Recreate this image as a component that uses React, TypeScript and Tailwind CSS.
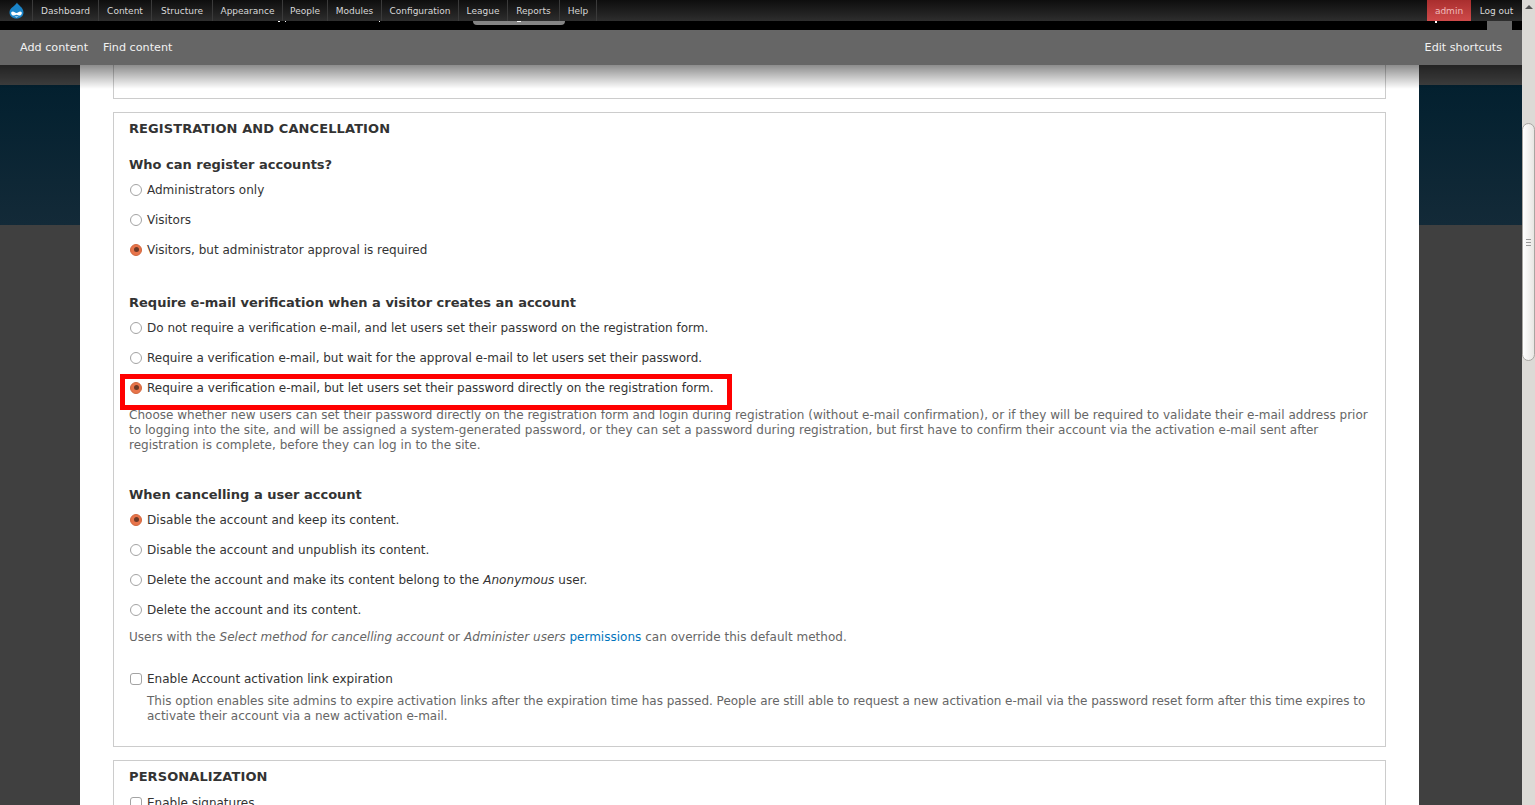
const font = { fontFamily: '"DejaVu Sans", sans-serif' };

const menu = [
    { label: 'Dashboard', width: 'w-[66px]' },
    { label: 'Content', width: 'w-[53px]' },
    { label: 'Structure', width: 'w-[61px]' },
    { label: 'Appearance', width: 'w-[70px]' },
    { label: 'People', width: 'w-[45px]' },
    { label: 'Modules', width: 'w-[54px]' },
    { label: 'Configuration', width: 'w-[77px]' },
    { label: 'League', width: 'w-[49px]' },
    { label: 'Reports', width: 'w-[52px]' },
    { label: 'Help', width: 'w-[37px]' },
];

function DrupalLogo() {
    return (
        <svg width="15" height="17" viewBox="0 0 15 17">
            <path d="M8 0.5 C8.5 3 14.5 5 14.5 10.5 C14.5 14 11.5 16.5 7.5 16.5 C3.5 16.5 0.5 14 0.5 10.5 C0.5 5.5 6.5 4 8 0.5 Z" fill="#1a84c8" />
            <path d="M2.5 10 C4 8.5 6 10.5 7.5 11 C9 10.5 11 8.5 12.5 10 C13.5 11.5 12 14 10 13.5 L7.5 12.8 L5 13.5 C3 14 1.5 11.5 2.5 10 Z" fill="#fff" />
            <path d="M5.5 14.5 H9.5 L7.5 15.6 Z" fill="#fff" />
        </svg>
    );
}

function Radio({ checked }: { checked?: boolean }) {
    if (checked) {
        return (
            <span className="ml-px flex h-[12px] w-[12px] shrink-0 items-center justify-center rounded-full border border-[#d0683f] bg-[#e8744a]">
                <span className="h-[5px] w-[5px] rounded-full bg-[#6b3a28]" />
            </span>
        );
    }
    return <span className="ml-px h-[12px] w-[12px] shrink-0 rounded-full border border-[#a3a3a3] bg-white" />;
}

function Option({ label, checked, className }: { label: React.ReactNode; checked?: boolean; className?: string }) {
    return (
        <div className={`flex h-[30px] items-center gap-[5px] ${className ?? ''}`}>
            <Radio checked={checked} />
            <span className="text-[12px] text-[#333]">{label}</span>
        </div>
    );
}

function Check({ label, className }: { label: string; className?: string }) {
    return (
        <div className={`flex h-[15px] items-center gap-[5px] ${className ?? ''}`}>
            <span className="ml-px h-[12px] w-[12px] shrink-0 rounded-[3px] border border-[#a3a3a3] bg-white" />
            <span className="text-[12px] text-[#333]">{label}</span>
        </div>
    );
}

function Heading({ children, className }: { children: React.ReactNode; className?: string }) {
    return <h3 className={`text-[13px] leading-[16px] font-bold text-[#333] ${className ?? ''}`}>{children}</h3>;
}

function Side({ className }: { className: string }) {
    return (
        <div className={`flex shrink-0 flex-col bg-[#404040] ${className}`}>
            <div className="h-[20px]" />
            <div className="h-[140px] bg-gradient-to-b from-[#03202f] to-[#132a38]" />
        </div>
    );
}

function Scrollbar() {
    return (
        <div className="flex h-[805px] w-[13px] shrink-0 flex-col bg-[#dcdad6]">
            <div className="flex h-[13px] items-center justify-center">
                <span className="h-0 w-0 border-x-[4px] border-b-[4px] border-x-transparent border-b-[#555]" />
            </div>
            <div className="h-[110px]" />
            <div className="flex h-[238px] flex-col items-center justify-center gap-[2px] rounded-[7px] border border-[#a8a6a2] bg-gradient-to-r from-[#fff] to-[#e8e6e3]">
                <span className="h-px w-[5px] bg-[#999]" />
                <span className="h-px w-[5px] bg-[#999]" />
                <span className="h-px w-[5px] bg-[#999]" />
            </div>
        </div>
    );
}

export default function App() {
    return (
        <div className="relative h-[805px] w-[1535px] overflow-hidden bg-white" style={font}>
            {/* admin toolbar */}
            <div className="flex h-[21px] items-stretch justify-between bg-gradient-to-b from-[#0e0e0e] to-[#2e2e2e] pr-[13px] text-[9px] text-[#d8d8d8]">
                <div className="flex items-stretch">
                    <div className="flex w-[33px] items-center justify-center border-r border-[#3a3a3a]">
                        <DrupalLogo />
                    </div>
                    {menu.map(item => (
                        <span key={item.label} className={`flex items-center justify-center border-r border-[#3a3a3a] pt-[2px] ${item.width}`}>{item.label}</span>
                    ))}
                </div>
                <div className="flex items-stretch">
                    <span className="flex w-[44px] items-center justify-center bg-gradient-to-b from-[#a92e2e] to-[#cf4a4a] pt-[2px] text-[#f0bcbc]">admin</span>
                    <span className="flex w-[51px] items-center justify-center pt-[2px]">Log out</span>
                </div>
            </div>

            {/* strip of page showing behind the toolbar */}
            <div className="flex h-[9px] bg-black">
                <span className="ml-[278px] h-px w-[2px] bg-white" />
                <span className="ml-[5px] h-px w-px bg-white" />
                <span className="ml-[93px] h-px w-px bg-white" />
                <div className="ml-[93px] flex h-[4px] w-[92px] justify-center rounded-b-[8px] bg-[#858585]">
                    <span className="h-px w-[4px] bg-white" />
                </div>
                <span className="ml-[870px] h-[2px] w-[2px] bg-white" />
                <div className="ml-[50px] w-[25px] bg-[#666]" />
            </div>

            {/* shortcuts */}
            <div className="flex h-[35px] items-center justify-between bg-[#666] pt-[2px] pl-[20px] pr-[33px] text-[11.2px] text-[#f2f2f2]">
                <div className="flex gap-[15px]">
                    <span>Add content</span>
                    <span>Find content</span>
                </div>
                <span>Edit shortcuts</span>
            </div>

            <div className="flex">
                <Side className="w-[80px]" />

                <main className="w-[1339px] shrink-0 bg-white px-[33px]">
                    <div className="h-[34px] border-x border-b border-[#ccc]" />

                    <section className="mt-[13px] h-[635px] border border-[#ccc] px-[15px] pt-[7.5px]">
                        <h2 className="text-[13px] leading-[16px] font-bold tracking-[0.1px] text-[#333]">REGISTRATION AND CANCELLATION</h2>

                        <Heading className="mt-[20px]">Who can register accounts?</Heading>
                        <Option className="mt-[2px]" label="Administrators only" />
                        <Option label="Visitors" />
                        <Option label="Visitors, but administrator approval is required" checked />

                        <Heading className="mt-[30px]">Require e-mail verification when a visitor creates an account</Heading>
                        <Option className="mt-[2px]" label="Do not require a verification e-mail, and let users set their password on the registration form." />
                        <Option label={<span className="tracking-[-0.02px]">Require a verification e-mail, but wait for the approval e-mail to let users set their password.</span>} />
                        <Option label="Require a verification e-mail, but let users set their password directly on the registration form." checked />
                        <p className="mt-[5px] text-[12px] leading-[15px] tracking-[0.02px] text-[#666]">
                            Choose whether new users can set their password directly on the registration form and login during registration (without e-mail confirmation), or if they will be required to validate their e-mail address prior to logging into the site, and will be assigned a system-generated password, or they can set a password during registration, but first have to confirm their account via the activation e-mail sent after registration is complete, before they can log in to the site.
                        </p>

                        <Heading className="mt-[34px]">When cancelling a user account</Heading>
                        <div className="tracking-[0.05px]">
                            <Option className="mt-[2px]" label="Disable the account and keep its content." checked />
                            <Option label="Disable the account and unpublish its content." />
                            <Option label={<>Delete the account and make its content belong to the <em>Anonymous</em> user.</>} />
                            <Option label="Delete the account and its content." />
                        </div>
                        <p className="mt-[5px] text-[12px] leading-[15px] tracking-[0.02px] text-[#666]">
                            Users with the <em>Select method for cancelling account</em> or <em>Administer users</em> <span className="text-[#0074bd]">permissions</span> can override this default method.
                        </p>

                        <Check className="mt-[27px]" label="Enable Account activation link expiration" />
                        <p className="mt-[7px] ml-[18px] text-[12px] leading-[15px] tracking-[-0.02px] text-[#666]">
                            This option enables site admins to expire activation links after the expiration time has passed. People are still able to request a new activation e-mail via the password reset form after this time expires to activate their account via a new activation e-mail.
                        </p>
                    </section>

                    <section className="mt-[13px] h-[80px] border border-[#ccc] px-[15px] pt-[7.5px]">
                        <h2 className="text-[13px] leading-[16px] font-bold tracking-[0.1px] text-[#333]">PERSONALIZATION</h2>
                        <Check className="mt-[10.5px]" label="Enable signatures" />
                    </section>
                </main>

                <Side className="w-[103px]" />
            </div>

            {/* toolbar shadow falling over the page */}
            <div className="absolute top-[65px] left-0 h-[24px] w-[1522px] bg-gradient-to-b from-black/45 to-transparent" />

            {/* red annotation box */}
            <div className="absolute top-[374px] left-[120px] h-[36px] w-[612px] border-[5px] border-[#f00]" />

            <div className="absolute top-0 right-0">
                <Scrollbar />
            </div>
        </div>
    );
}
